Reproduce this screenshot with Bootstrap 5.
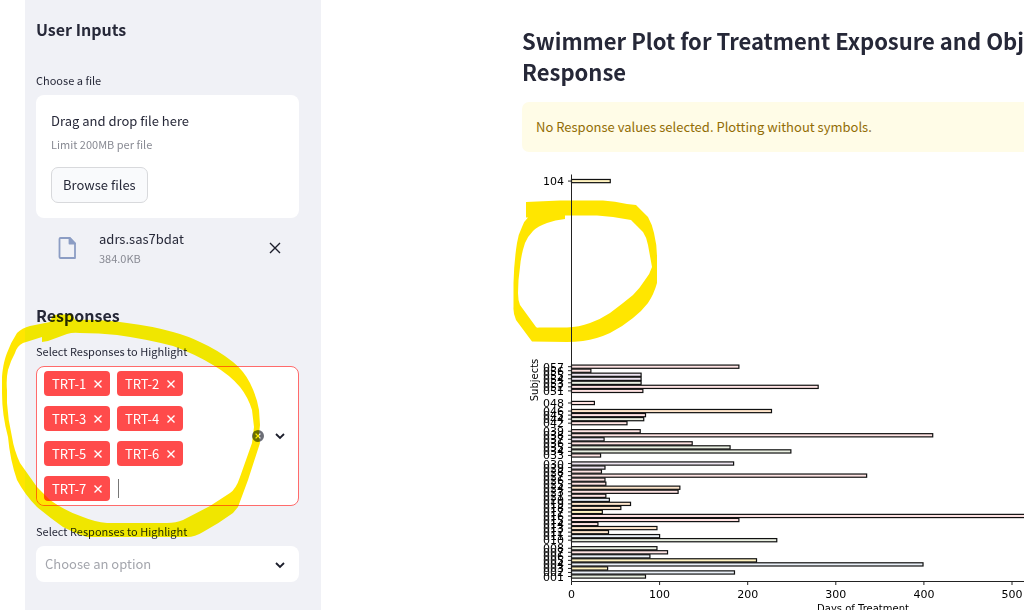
<!DOCTYPE html>
<html lang="en">
<head>
<meta charset="utf-8">
<meta name="viewport" content="width=device-width, initial-scale=1">
<title>Swimmer Plot</title>
<link rel="stylesheet" href="https://cdn.jsdelivr.net/npm/bootstrap@5.3.0/dist/css/bootstrap.min.css">
<style>
  :root { --ink: #262838; --muted-ink: #888a93; --accent: #ff4b4b; }
  body { font-family: "Noto Sans CJK JP", "Noto Sans", sans-serif; font-size: 13px; line-height: 20px; color: var(--ink); background: #fff; }
  .side { width: 296px; margin-left: 25px; padding: 18px 22px 0 11px; background: #f0f1f6; }
  .side h2 { font-size: 16px; line-height: 22px; font-weight: 700; margin: 0; }
  .field-label { font-size: 11px; line-height: 18px; display: block; margin-bottom: 6px; }
  .fine { font-size: 11px; line-height: 18px; color: var(--muted-ink); }
  .uploader { margin-top: 31px; }
  .dropzone { border-radius: 8px; padding: 16px 15px 15px; }
  .dropzone .fine { margin: 4px 0 14px; }
  .browse { font-size: 13px; line-height: 20px; color: var(--ink); background: #f9fafc; border: 1px solid #d8d9dc; border-radius: 7px; padding: 7px 11px; }
  .file-row { padding: 11px 18px 0 20px; }
  .file-name { margin-left: 21px; }
  .bare { border: 0; background: none; padding: 0; line-height: 0; color: inherit; }
  .responses { margin-top: 33px; }
  .multi { border: 1px solid #ff6b6b; border-radius: 8px; padding: 4px 12px 4px 7px; }
  .tags { gap: 10px 7px; }
  .tag { height: 25px; width: 66px; padding: 0 8px; color: #fff; background: var(--accent); border-radius: 4px; }
  .tag-entry { width: 60px; height: 19px; border: 0; border-left: 1px solid #777; margin-left: 1px; background: none; outline: 0; }
  .clear-all { margin-right: 10px; }
  .choice { font-size: 13px; line-height: 20px; color: #a3a5ac; border: 0; border-radius: 8px; padding: 8px 40px 8px 9px; appearance: none; background: #fff; }
  .chev { right: 13px; top: 13px; }
  .marker { left: -36px; top: 5px; mix-blend-mode: darken; pointer-events: none; }
  .main { padding: 25px 0 0 201px; }
  .wide { min-width: 660px; }
  .main h1 { font-size: 22px; line-height: 31px; font-weight: 700; margin: 0 0 15px; white-space: nowrap; }
  .notice { background: #fffce7; color: #926c05; border: 0; border-radius: 7px; padding: 15px 14px; margin: 0 0 18px; }
  .plot { margin-left: -10px; font-family: "DejaVu Sans", sans-serif; font-size: 11px; }
  .axis-name { font-size: 10px; }
</style>
</head>
<body>
<div class="d-flex vh-100 overflow-hidden">
  <aside class="side flex-shrink-0 min-vh-100">
    <h2>User Inputs</h2>
    <div class="uploader">
      <label class="field-label" for="browse">Choose a file</label>
      <div class="dropzone bg-white">
        <div>Drag and drop file here</div>
        <div class="fine">Limit 200MB per file</div>
        <button class="browse" id="browse" type="button">Browse files</button>
      </div>
      <div class="file-row d-flex align-items-center">
        <svg width="22" height="24" viewBox="0 0 22 24" fill="none" stroke="#8c9dc4" stroke-width="1.8" stroke-linejoin="round"><path d="M4.5 2h9.5l5 5.500v14.500h-14.500a1 1 0 0 1-1-1v-18a1 1 0 0 1 1-1z"/><path d="M13.500 2v5.500h5.500z" fill="#8c9dc4"/></svg>
        <div class="file-name flex-grow-1">
          <div>adrs.sas7bdat</div>
          <div class="fine">384.0KB</div>
        </div>
        <button class="bare" type="button" aria-label="Remove file"><svg width="12" height="12" viewBox="0 0 12 12" stroke="#1c1e2b" stroke-width="1.4"><path d="M1 1l10 10M11 1L1 11"/></svg></button>
      </div>
    </div>

    <section class="responses position-relative pt-1">
      <h2>Responses</h2>
      <div class="mt-3">
        <label class="field-label" for="tagEntry">Select Responses to Highlight</label>
        <div class="multi bg-white d-flex align-items-center">
          <div class="tags d-flex flex-wrap align-items-center flex-grow-1" id="tags">
            <input class="tag-entry" id="tagEntry" type="text">
          </div>
          <button class="bare clear-all" type="button" aria-label="Clear all"><svg width="12" height="12" viewBox="0 0 12 12"><circle cx="6" cy="6" r="6" fill="#6c6e77"/><path d="M3.600 3.600l4.800 4.800M8.400 3.600L3.600 8.400" stroke="#fff" stroke-width="1.300"/></svg></button>
          <button class="bare" type="button" aria-label="Open list"><svg width="12" height="12" viewBox="0 0 12 12" fill="none" stroke="#1c1e2b" stroke-width="1.800"><path d="M2 4l4 4 4-4"/></svg></button>
        </div>
      </div>
      <div class="mt-3">
        <label class="field-label" for="choice">Select Responses to Highlight</label>
        <div class="position-relative">
          <select class="choice w-100" id="choice"><option>Choose an option</option></select>
          <svg class="chev position-absolute pe-none" width="12" height="12" viewBox="0 0 12 12" fill="none" stroke="#1c1e2b" stroke-width="1.800"><path d="M2 4l4 4 4-4"/></svg>
        </div>
      </div>
      <svg class="marker position-absolute" width="270" height="240" viewBox="0 305 270 240" fill="#ffe600" fill-rule="evenodd">
        <path d="M2 377C3 365 5 358 7 353Q11 342 17 333Q22 328 30 326L50 322L53 315L72 314L75 320Q100 319 127 323Q152 326 173 332Q188 336 200 342Q218 350 233 362Q244 371 250 383Q257 397 259 410L260 425L259 434L260 443L248 480L238 507L233 513Q218 524 203 532Q195 537 187 537H87Q74 533 63 527Q49 517 37 507Q25 495 17 480Q10 460 8 437Q2 415 2 393ZM7 390Q6 379 8 370Q11 360 15 353Q17 346 23 343L42 337V342L48 341L67 334Q73 332 80 333Q99 333 117 335Q146 339 173 346Q195 354 213 365Q230 375 240 387Q248 397 252 410L254 427L252 443Q246 460 240 477Q236 489 230 493L210 506L183 520Q176 523 167 523H107Q95 522 83 517Q65 511 50 500L37 487L20 463Q14 450 12 437Q8 420 7 403Z"/>
      </svg>
    </section>
  </aside>

  <main class="main flex-grow-1 overflow-hidden">
    <div class="wide">
      <h1>Swimmer Plot for Treatment Exposure and Objective<br>Response</h1>
      <div class="notice alert" role="alert">No Response values selected. Plotting without symbols.</div>
      <svg class="plot d-block" width="660" height="445" viewBox="512 170 660 445" role="img" aria-label="Swimmer plot">
        <path fill="#ffe600" fill-rule="evenodd" d="M526 202L560 200.500H603Q615 201 627 204L636 205L648 217Q652 224 654 233Q657 245 657 257V283Q654 294 648 303Q641 312 633 318Q622 327 610 333Q597 339 583 341Q575 342 567 342L532 341.500L516 320Q513 313 513.500 307V283Q514 262 517 243Q518 235 522 227Q524 221 528 217.500H526ZM565 219V215.500H597Q605 216 613 217L631 220L643 232Q647 238 648 245L652 267Q650 274 645 280Q640 288 633 295Q622 304 610 313Q601 319 590 323Q579 327 567 327.500H539Q537 328 536 327L520 305Q518 300 518 293Q518 280 520 267Q521 255 525 243Q528 236 533 231Q538 226 547 223Q555 220 565 219Z"/>
        <g id="bars" stroke="#111" stroke-width="1.200"></g>
        <path d="M571.500 174.500V581.500H1160" fill="none" stroke="#222" stroke-width="1"/>
        <g id="ticks" stroke="#222" stroke-width="1"></g>
        <g id="names" text-anchor="end"></g>
        <g id="days" text-anchor="middle"></g>
        <text class="axis-name" x="863" y="612" text-anchor="middle">Days of Treatment</text>
        <text class="axis-name" transform="translate(538 380) rotate(-90)" text-anchor="middle">Subjects</text>
      </svg>
    </div>
  </main>
</div>
<script src="https://cdn.jsdelivr.net/npm/bootstrap@5.3.0/dist/js/bootstrap.bundle.min.js"></script>
<script>
  // Selected response tags
  const entry = document.getElementById('tagEntry');
  for (let i = 1; i <= 7; i++) {
    entry.insertAdjacentHTML('beforebegin',
      `<span class="tag d-flex align-items-center justify-content-between">TRT-${i}<button class="bare" type="button" aria-label="Remove TRT-${i}"><svg width="8" height="8" viewBox="0 0 8 8" stroke="#fff" stroke-width="1.400"><path d="M.5 .5l7 7M7.500 .5l-7 7"/></svg></button></span>`);
  }

  // One entry per subject: [row, days on treatment]
  const subjects = [
    [0,84],[1,185],[2,41],[3,399],[4,210],[5,89],[6,109],[7,97],[9,233],[10,100],[11,42],[12,97],[13,30],[14,190],[15,640],
    [16,35],[17,56],[18,67],[19,43],[20,39],[21,121],[22,123],[23,39],[24,38],[25,335],[26,34],[27,38],[28,184],[30,33],
    [31,249],[32,180],[33,137],[34,37],[35,410],[36,78],[38,63],[39,82],[40,84],[41,227],[43,26],[46,81],[47,280],[48,79],
    [49,79],[50,79],[51,22],[52,190],[98,44]
  ];
  const pink = '#ffe3e3', peach = '#ffe6cc', cream = '#fff3c0', sage = '#eaf0e2', ice = '#eaf0f8', lilac = '#efe6f2';
  const tint = row =>
    [4, 2, 16, 98].includes(row) ? cream :
    [11, 12, 17, 18, 22, 41].includes(row) ? peach :
    [0, 7, 9, 31, 32, 39, 48].includes(row) ? sage :
    [1, 3, 5, 10, 19].includes(row) ? ice :
    [27, 28, 34, 49, 50].includes(row) ? lilac : pink;
  const rowY = row => 576.5 - row * 4.035;
  const dayX = day => 571.5 + day * 0.881;
  const label = row => String(row === 98 ? 104 : row === 38 ? 42 : row + (row <= 20 ? 1 : row <= 28 ? 2 : row <= 36 ? 3 : 5)).padStart(3, '0');
  let bars = '', ticks = '', names = '', days = '';
  for (const [row, day] of subjects) {
    const y = rowY(row);
    bars += `<rect x="571.500" y="${y - 1.6}" width="${dayX(day) - 571.5}" height="3.200" fill="${tint(row)}"/>`;
    ticks += `<path d="M568 ${y}h3.500"/>`;
    names += `<text x="564" y="${y + 4}">${label(row)}</text>`;
  }
  for (let d = 0; d <= 600; d += 100) {
    ticks += `<path d="M${dayX(d)} 581.500v3.500"/>`;
    days += `<text x="${dayX(d)}" y="598">${d}</text>`;
  }
  document.getElementById('bars').innerHTML = bars;
  document.getElementById('ticks').innerHTML = ticks;
  document.getElementById('names').innerHTML = names;
  document.getElementById('days').innerHTML = days;
</script>
</body>
</html>
